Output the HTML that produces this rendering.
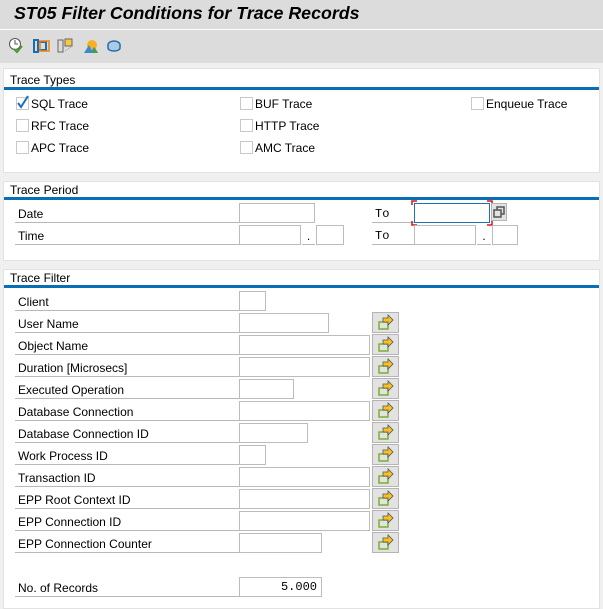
<!DOCTYPE html>
<html><head><style>
*{margin:0;padding:0;box-sizing:border-box}
body{width:603px;height:606px;background:#f0f0f0;font-family:"Liberation Sans",sans-serif;font-size:12px;color:#000;position:relative;overflow:hidden}
.a{position:absolute}
.panel{position:absolute;left:3px;width:597px;background:#fff;border:1px solid #e2e2e2}
.hd{position:absolute;left:10px;font-size:12px}
.bl{position:absolute;left:4px;width:595px;height:3px;background:#0a6eb4}
.lbl{position:absolute;left:15px;width:224px;height:20px;border-bottom:1px solid #b8b8b8;padding-left:3px;line-height:22px}
.in{position:absolute;height:20px;border:1px solid #bcbcbc;background:#fff}
.cb{position:absolute;width:13px;height:13px;border:1px solid #c8c8c8;background:#fff}
.btn{position:absolute;left:372px;width:27px;height:21px;border:1px solid #b4b4b4;background:#e2e2e2}
.mono{font-family:"Liberation Mono",monospace;font-size:12px}
</style></head><body>
<div class="a" style="left:0;top:0;width:603px;height:29px;background:#dcdcdc"></div>
<div class="a" style="left:14px;top:3px;font-size:17.8px;font-weight:bold;font-style:italic;color:#000">ST05 Filter Conditions for Trace Records</div>
<div class="a" style="left:0;top:29px;width:603px;height:1px;background:#fff"></div>
<div class="a" style="left:0;top:30px;width:603px;height:33px;background:#dcdcdc"></div>
<svg class="a" style="left:8px;top:36px" width="120" height="20">
<circle cx="7" cy="8" r="5.5" fill="#fff" stroke="#555"/><path d="M7 4v4h3" stroke="#555" fill="none"/><path d="M6 13l3 3 5-6" stroke="#4a9a2a" stroke-width="2" fill="none"/>
<path d="M26 4h4v12h-4zM30 6h8v8h-8" stroke="#1a6fb0" stroke-width="2" fill="none"/><rect x="32" y="5" width="9" height="10" fill="none" stroke="#f08010" stroke-width="1.5"/>
<rect x="50" y="4" width="5" height="12" fill="none" stroke="#666"/><rect x="57" y="3" width="7" height="7" fill="#f8c840" stroke="#666"/><path d="M57 15l6-4" stroke="#999" stroke-dasharray="1 1"/>
<circle cx="84" cy="9" r="5" fill="#f8b020"/><path d="M76 17l5-8 4 8zM82 17l4-6 4 6z" fill="#3a8ad0"/><path d="M84 17l3-5 3 5z" fill="#4aa030"/>
<ellipse cx="106" cy="9" rx="6" ry="4" fill="#a8cce8" stroke="#2a6ca8" stroke-width="1.5"/><path d="M100 9v3a6 3 0 0 0 12 0v-3" fill="#a8cce8" stroke="#2a6ca8" stroke-width="1.5"/>
</svg>

<div class="panel" style="top:68px;height:105px"></div>
<div class="hd" style="top:73px">Trace Types</div>
<div class="bl" style="top:87px"></div>
<div class="cb" style="left:16px;top:97px"></div><svg class="a" style="left:17px;top:95px" width="12" height="14"><path d="M1 8l3 4 7-11" stroke="#1a6fc0" stroke-width="2" fill="none"/></svg>
<div class="a" style="left:31px;top:97px">SQL Trace</div>
<div class="cb" style="left:16px;top:119px"></div><div class="a" style="left:31px;top:119px">RFC Trace</div>
<div class="cb" style="left:16px;top:141px"></div><div class="a" style="left:31px;top:141px">APC Trace</div>
<div class="cb" style="left:240px;top:97px"></div><div class="a" style="left:255px;top:97px">BUF Trace</div>
<div class="cb" style="left:240px;top:119px"></div><div class="a" style="left:255px;top:119px">HTTP Trace</div>
<div class="cb" style="left:240px;top:141px"></div><div class="a" style="left:255px;top:141px">AMC Trace</div>
<div class="cb" style="left:471px;top:97px"></div><div class="a" style="left:486px;top:97px">Enqueue Trace</div>

<div class="panel" style="top:181px;height:80px"></div>
<div class="hd" style="top:183px">Trace Period</div>
<div class="bl" style="top:197px"></div>
<div class="lbl" style="top:203px">Date</div>
<div class="in" style="left:239px;top:203px;width:76px"></div>
<div class="lbl" style="top:225px">Time</div>
<div class="in" style="left:239px;top:225px;width:62px"></div>
<div class="a" style="left:302px;top:225px;width:13px;height:20px;border-bottom:1px solid #b8b8b8;text-align:center;line-height:22px">.</div>
<div class="in" style="left:316px;top:225px;width:28px"></div>
<div class="a mono" style="left:372px;top:203px;width:42px;height:20px;border-bottom:1px solid #b8b8b8;padding-left:3px;line-height:22px">To</div>
<div class="a mono" style="left:372px;top:225px;width:42px;height:20px;border-bottom:1px solid #b8b8b8;padding-left:3px;line-height:22px">To</div>
<div class="in" style="left:414px;top:203px;width:76px;border-color:#1a73b8"></div>
<svg class="a" style="left:411px;top:200px" width="82" height="26"><path d="M1 5V1h5M76 1h5v4M1 21v4h5M76 25h5v-4" stroke="#e01010" stroke-width="1.5" fill="none"/></svg>
<div class="a" style="left:491px;top:203px;width:16px;height:18px;border:1px solid #b4b4b4;background:#e2e2e2"></div>
<svg class="a" style="left:492px;top:204px" width="14" height="16"><rect x="2" y="6" width="7" height="7" fill="none" stroke="#555" stroke-width="1.5"/><path d="M5 6V3h7v7H9" fill="none" stroke="#555" stroke-width="1.5"/></svg>
<div class="in" style="left:414px;top:225px;width:62px"></div>
<div class="a" style="left:477px;top:225px;width:14px;height:20px;border-bottom:1px solid #b8b8b8;text-align:center;line-height:22px">.</div>
<div class="in" style="left:492px;top:225px;width:26px"></div>

<div class="panel" style="top:269px;height:340px"></div>
<div class="hd" style="top:271px">Trace Filter</div>
<div class="bl" style="top:285px"></div>

<div class="lbl" style="top:291px">Client</div><div class="in" style="left:239px;top:291px;width:27px"></div>
<div class="lbl" style="top:313px">User Name</div><div class="in" style="left:239px;top:313px;width:90px"></div>
<div class="lbl" style="top:335px">Object Name</div><div class="in" style="left:239px;top:335px;width:131px"></div>
<div class="lbl" style="top:357px">Duration [Microsecs]</div><div class="in" style="left:239px;top:357px;width:131px"></div>
<div class="lbl" style="top:379px">Executed Operation</div><div class="in" style="left:239px;top:379px;width:55px"></div>
<div class="lbl" style="top:401px">Database Connection</div><div class="in" style="left:239px;top:401px;width:131px"></div>
<div class="lbl" style="top:423px">Database Connection ID</div><div class="in" style="left:239px;top:423px;width:69px"></div>
<div class="lbl" style="top:445px">Work Process ID</div><div class="in" style="left:239px;top:445px;width:27px"></div>
<div class="lbl" style="top:467px">Transaction ID</div><div class="in" style="left:239px;top:467px;width:131px"></div>
<div class="lbl" style="top:489px">EPP Root Context ID</div><div class="in" style="left:239px;top:489px;width:131px"></div>
<div class="lbl" style="top:511px">EPP Connection ID</div><div class="in" style="left:239px;top:511px;width:131px"></div>
<div class="lbl" style="top:533px">EPP Connection Counter</div><div class="in" style="left:239px;top:533px;width:83px"></div>
<div class="lbl" style="top:577px">No. of Records</div><div class="in mono" style="left:239px;top:577px;width:83px;text-align:right;padding-right:4px;line-height:19px">5.000</div>

<div id="btns"></div>
<script>
var h='';for(var i=0;i<11;i++){var t=313+i*22-1;h+='<div class="btn" style="top:'+t+'px"><svg width="25" height="19"><rect x="6" y="9" width="9" height="7" fill="none" stroke="#7ab030" stroke-width="1.5"/><path d="M10 5h5V2l5 5-5 5V9h-5z" fill="#f8c020" stroke="#555" stroke-width="0.8"/></svg></div>';}
document.getElementById('btns').innerHTML=h;
</script>
</body></html>
